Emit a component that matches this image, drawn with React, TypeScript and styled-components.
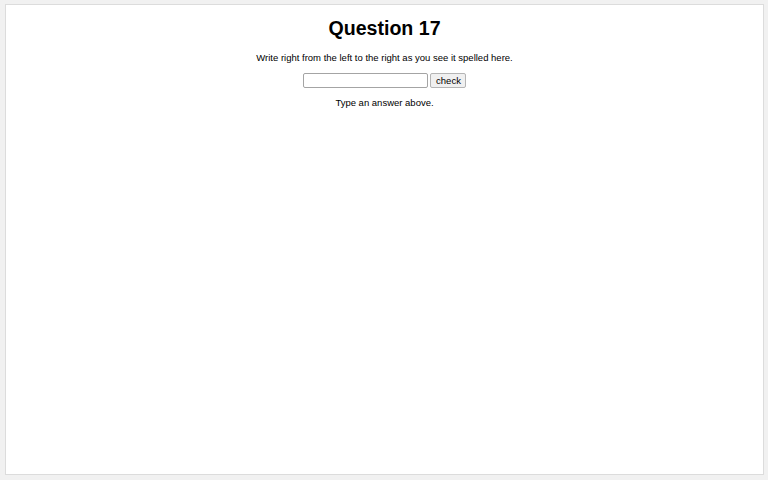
import React from "react";
import styled, { createGlobalStyle } from "styled-components";

const Global = createGlobalStyle`
  html, body { margin: 0; padding: 0; background: #f1f1f1; }
  body { font-family: "Liberation Sans", Arial, sans-serif; color: #000; }
`;

const Page = styled.div`
  padding: 4px 4px 5px 5px;
  box-sizing: border-box;
  height: 480px;
  display: flex;
`;

const Card = styled.div`
  flex: 1;
  background: #fff;
  border: 1px solid #dcdcdc;
  display: flex;
  flex-direction: column;
  align-items: center;
`;

const Title = styled.h1`
  margin: 11px 0 0;
  font-size: 19.6px;
  font-weight: bold;
  line-height: 24px;
`;

const Prompt = styled.p`
  margin: 12px 0 0;
  font-size: 9.5px;
  line-height: 12px;
`;

const Row = styled.div`
  display: flex;
  gap: 2px;
  margin-top: 9px;
  align-items: center;
`;

const Input = styled.input`
  width: 125px;
  height: 15px;
  box-sizing: border-box;
  border: 1px solid #a4a4a4;
  border-radius: 2px;
  padding: 0 2px;
  font-size: 9.5px;
  font-family: inherit;
`;

const Button = styled.button`
  height: 15px;
  box-sizing: border-box;
  padding: 0 4px 0 5px;
  border: 1px solid #b4b4b4;
  border-radius: 2px;
  background: #f0f0f0;
  font-size: 9.5px;
  font-family: inherit;
  line-height: 13px;
  color: #000;
`;

const Status = styled.p`
  margin: 9px 0 0;
  font-size: 9.5px;
  line-height: 12px;
`;

export default function App() {
  return (
    <>
      <Global />
      <Page>
        <Card>
          <Title>Question 17</Title>
          <Prompt>Write right from the left to the right as you see it spelled here.</Prompt>
          <Row>
            <Input type="text" />
            <Button>check</Button>
          </Row>
          <Status>Type an answer above.</Status>
        </Card>
      </Page>
    </>
  );
}
